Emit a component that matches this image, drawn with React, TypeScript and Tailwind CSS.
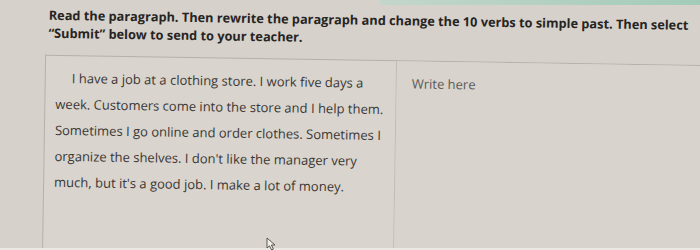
export default function App() {
  return (
    <div className="relative w-[700px] h-[250px] overflow-hidden bg-[#d6d1ca] font-['Open_Sans',sans-serif] text-[#2a2826]">
      <div className="absolute right-0 top-0 h-[5px] w-[320px] bg-gradient-to-r from-[#c4d6cc] to-[#a3cbba]" />
      <div className="w-[720px] origin-top-left rotate-[0.9deg]">
        <div className="pl-[49px] pr-2 pt-[5px]">
          <h1 className="text-[12.75px] font-bold leading-[18px] text-[#262422]">
            Read the paragraph. Then rewrite the paragraph and change the 10 verbs to simple past. Then select
            <br />
            &ldquo;Submit&rdquo; below to send to your teacher.
          </h1>
        </div>
        <div className="ml-[46px] mt-[13px] flex h-[200px] border-l border-t border-[#b5b0a9] bg-[#d9d4cd]">
          <div className="w-[351px] shrink-0 border-r border-[#c0bbb4] pl-[10px] pt-[9px]">
            <p className="text-[13px] leading-[26px] text-[#3a3735]">
              <span className="pl-[16px]">I have a job at a clothing store. I work five days a</span>
              <br />
              week. Customers come into the store and I help them.
              <br />
              Sometimes I go online and order clothes. Sometimes I
              <br />
              organize the shelves. I don&apos;t like the manager very
              <br />
              much, but it&apos;s a good job. I make a lot of money.
            </p>
          </div>
          <div className="flex-1 bg-[#d8d3cc] pl-[15px] pt-[9px]">
            <p className="text-[13px] leading-[26px] text-[#5d5a57]">Write here</p>
          </div>
        </div>
      </div>
      <div className="absolute bottom-0 left-0 h-[2px] w-full bg-[#ebe7e2]" />
      <svg className="absolute left-[266px] top-[237px]" width="12" height="14" viewBox="0 0 12 14">
        <path d="M1 1 L1 11 L3.5 8.8 L5.6 13 L7.4 12.1 L5.4 8 L9 8 Z" fill="#f2efea" stroke="#4a4744" strokeWidth="0.9" strokeLinejoin="round" />
      </svg>
    </div>
  );
}
